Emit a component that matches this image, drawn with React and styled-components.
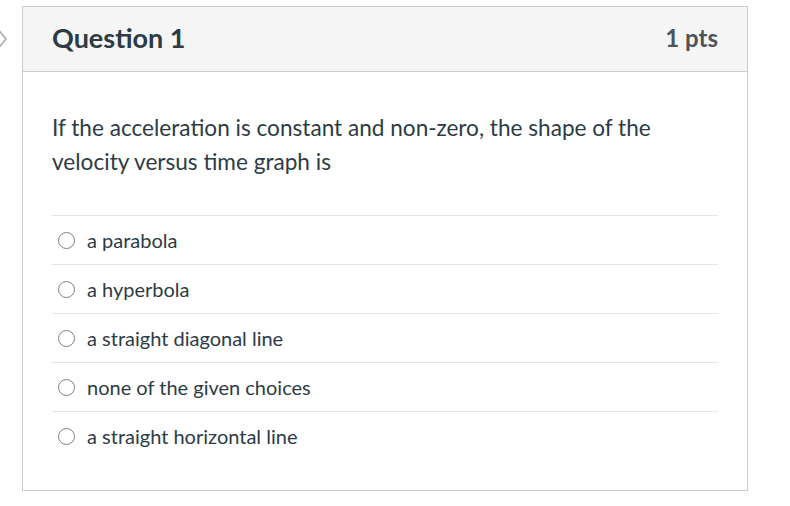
import React from "react";
import styled, { createGlobalStyle } from "styled-components";

const GlobalStyle = createGlobalStyle`
  body {
    margin: 0;
    background: #fff;
    font-family: Lato, "Liberation Sans", sans-serif;
    color: #2d3b45;
  }
`;

const Page = styled.div`
  display: flex;
  align-items: flex-start;
  padding: 6px 0 0 0;
`;

const Nav = styled.div`
  width: 22px;
  display: flex;
  padding-top: 21px;
  margin-left: -6px;
  margin-right: 6px;
`;

const Card = styled.div`
  width: 724px;
  height: 483px;
  border: 1px solid #c7cdd1;
  display: flex;
  flex-direction: column;
  box-sizing: content-box;
`;

const Header = styled.div`
  height: 65px;
  background: #f5f5f5;
  border-bottom: 1px solid #c7cdd1;
  display: flex;
  align-items: center;
  justify-content: space-between;
  padding: 0 29px 4px 29px;
  box-sizing: border-box;
`;

const Title = styled.h2`
  margin: 0;
  font-size: 27px;
  font-weight: 700;
  color: #2d3b45;
`;

const Points = styled.span`
  font-size: 24px;
  font-weight: 700;
  color: #4b555c;
`;

const Body = styled.div`
  padding: 39px 29px 0 29px;
`;

const Prompt = styled.p`
  margin: 0 0 36px;
  font-size: 22.6px;
  line-height: 34px;
  color: #2d3b45;
`;

const Answers = styled.ul`
  list-style: none;
  margin: 0;
  padding: 0;
`;

const Answer = styled.li`
  height: 48px;
  border-top: 1px solid #e3e6e8;
  display: flex;
  align-items: center;
  padding-left: 6px;
  gap: 12px;
  font-size: 20px;
  color: #2d3b45;
`;

const Radio = styled.span`
  width: 15px;
  height: 15px;
  border: 1.5px solid #73818c;
  border-radius: 50%;
  flex-shrink: 0;
  margin-top: 1px;
`;

const choices = [
  "a parabola",
  "a hyperbola",
  "a straight diagonal line",
  "none of the given choices",
  "a straight horizontal line",
];

export default function App() {
  return (
    <Page>
      <GlobalStyle />
      <Nav>
        <svg width="14" height="24" viewBox="0 0 14 24">
          <path d="M3 1 L12 12 L3 23" fill="none" stroke="#a3acb3" strokeWidth="1.6" />
        </svg>
      </Nav>
      <Card>
        <Header>
          <Title>Question 1</Title>
          <Points>1 pts</Points>
        </Header>
        <Body>
          <Prompt>
            If the acceleration is constant and non-zero, the shape of the
            <br />
            velocity versus time graph is
          </Prompt>
          <Answers>
            {choices.map((c) => (
              <Answer key={c}>
                <Radio />
                {c}
              </Answer>
            ))}
          </Answers>
        </Body>
      </Card>
    </Page>
  );
}
